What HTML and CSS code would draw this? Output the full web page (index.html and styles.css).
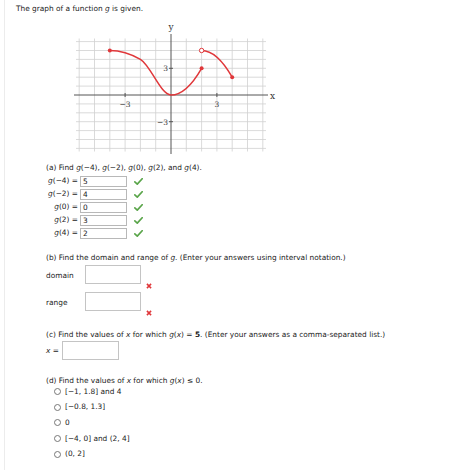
FILE: index.html
```
<!DOCTYPE html>
<html>
<head>
<meta charset="utf-8">
<link rel="stylesheet" href="styles.css">
</head>
<body>
<div class="page">
  <p class="title">The graph of a function <i>g</i> is given.</p>
  <svg class="graph" width="230" height="145" viewBox="58 18 230 145">
    <path class="grid" d="M79.2 38.5V151.5M94.5 38.5V151.5M109.8 38.5V151.5M125.1 38.5V151.5M140.4 38.5V151.5M155.7 38.5V151.5M186.3 38.5V151.5M201.6 38.5V151.5M216.9 38.5V151.5M232.2 38.5V151.5M247.5 38.5V151.5M262.8 38.5V151.5M76 41.6H266M76 50.5H266M76 59.4H266M76 68.3H266M76 77.2H266M76 86.1H266M76 103.9H266M76 112.8H266M76 121.7H266M76 130.6H266M76 139.5H266M76 148.4H266"/>
    <path class="axis" d="M74 95H268M171 34V154M125.1 93V97M216.9 93V97M169 68.3H173M169 121.7H173"/>
    <text class="axlbl" x="171" y="30" text-anchor="middle">y</text>
    <text class="axlbl" x="270" y="98.5">x</text>
    <text class="num" x="125.1" y="106.5" text-anchor="middle">−3</text>
    <text class="num" x="216.9" y="106.5" text-anchor="middle">3</text>
    <text class="num" x="168" y="71" text-anchor="end">3</text>
    <text class="num" x="168" y="124.5" text-anchor="end">−3</text>
    <path class="curve" d="M109.8 50.5Q125.1 50.5 140.4 59.4C150.6 65.33 160.8 95 171 95Q186.3 95 201.6 68.3"/>
    <path class="curve" d="M201.6 50.5Q216.9 50.5 232.2 77.2"/>
    <circle class="dot" cx="109.8" cy="50.5" r="2"/>
    <circle class="dot" cx="201.6" cy="68.3" r="2"/>
    <circle class="dot" cx="232.2" cy="77.2" r="2"/>
    <circle class="open" cx="201.6" cy="50.5" r="2.2"/>
  </svg>

  <div class="part part-a">
    <p class="q">(a) Find <i>g</i>(−4), <i>g</i>(−2), <i>g</i>(0), <i>g</i>(2), and <i>g</i>(4).</p>
    <div class="rows">
      <span class="lbl"><i>g</i>(−4) =</span><span class="box">5</span><span class="okcell"><svg class="ok" viewBox="0 0 10 8"><path d="M0.8 4.4L3.6 7L9.2 0.8"/></svg></span>
      <span class="lbl"><i>g</i>(−2) =</span><span class="box">4</span><span class="okcell"><svg class="ok" viewBox="0 0 10 8"><path d="M0.8 4.4L3.6 7L9.2 0.8"/></svg></span>
      <span class="lbl"><i>g</i>(0) =</span><span class="box">0</span><span class="okcell"><svg class="ok" viewBox="0 0 10 8"><path d="M0.8 4.4L3.6 7L9.2 0.8"/></svg></span>
      <span class="lbl"><i>g</i>(2) =</span><span class="box">3</span><span class="okcell"><svg class="ok" viewBox="0 0 10 8"><path d="M0.8 4.4L3.6 7L9.2 0.8"/></svg></span>
      <span class="lbl"><i>g</i>(4) =</span><span class="box">2</span><span class="okcell"><svg class="ok" viewBox="0 0 10 8"><path d="M0.8 4.4L3.6 7L9.2 0.8"/></svg></span>
    </div>
  </div>

  <div class="part part-b">
    <p class="q">(b) Find the domain and range of <i>g</i>. (Enter your answers using interval notation.)</p>
    <div class="dr-row">
      <span class="dr-lbl">domain</span><span class="bigbox"></span><svg class="bad" viewBox="0 0 8 8"><path d="M1.2 1.2L6.8 6.8M6.8 1.2L1.2 6.8"/></svg>
    </div>
    <div class="dr-row">
      <span class="dr-lbl">range</span><span class="bigbox"></span><svg class="bad" viewBox="0 0 8 8"><path d="M1.2 1.2L6.8 6.8M6.8 1.2L1.2 6.8"/></svg>
    </div>
  </div>

  <div class="part part-c">
    <p class="q">(c) Find the values of <i>x</i> for which <i>g</i>(<i>x</i>) = <b>5</b>. (Enter your answers as a comma-separated list.)</p>
    <div class="x-row">
      <span class="x-lbl"><i>x</i> =</span><span class="xbox"></span>
    </div>
  </div>

  <div class="part part-d">
    <p class="q">(d) Find the values of <i>x</i> for which <i>g</i>(<i>x</i>) ≤ 0.</p>
    <ul class="opts">
      <li><span class="radio"></span>[−1, 1.8] and 4</li>
      <li><span class="radio"></span>[−0.8, 1.3]</li>
      <li><span class="radio"></span>0</li>
      <li><span class="radio"></span>[−4, 0] and (2, 4]</li>
      <li><span class="radio"></span>(0, 2]</li>
    </ul>
  </div>
</div>
</body>
</html>
```

FILE: styles.css
```
html, body {
  margin: 0;
  padding: 0;
  background: #fff;
}
body {
  font-family: "DejaVu Sans", Verdana, sans-serif;
  font-size: 7.4px;
  color: #222;
  line-height: 10px;
}
.page {
  width: 474px;
  height: 470px;
  box-sizing: border-box;
  border-left: 1px solid #ececec;
  margin-left: 4px;
  padding-left: 11px;
}
p { margin: 0; }
.title {
  padding-top: 4px;
  line-height: 10px;
}
.graph {
  display: block;
  margin-top: 4px;
  margin-left: 42px;
}
.grid { stroke: #d0d0d0; stroke-width: 0.8; fill: none; }
.axis { stroke: #555; stroke-width: 1; fill: none; }
.axlbl { font-family: "DejaVu Serif", "Liberation Serif", serif; font-size: 9px; fill: #333; }
.num { font-family: "DejaVu Serif", "Liberation Serif", serif; font-size: 7.5px; fill: #333; }
.curve { stroke: #e0373a; stroke-width: 1.5; fill: none; stroke-linecap: round; }
.dot { fill: #e0373a; }
.open { fill: #fff; stroke: #e0373a; stroke-width: 1; }

.part { margin-left: 30px; }
.rows {
  display: grid;
  grid-template-columns: 32px 47px 16px;
  grid-auto-rows: 13px;
  column-gap: 2px;
  align-items: center;
  margin-top: 1.5px;
}
.lbl { text-align: right; white-space: nowrap; }
.box {
  height: 11px;
  box-sizing: border-box;
  border: 1px solid #b8b8b8;
  padding-left: 2px;
  line-height: 9px;
}
.okcell {
  display: flex;
  align-items: center;
  height: 13px;
  padding-left: 5px;
}
.ok {
  display: block;
  width: 9px;
  height: 7px;
}
.ok path { fill: none; stroke: #5aa54a; stroke-width: 1.9; stroke-linejoin: round; stroke-linecap: round; }

.part-b { margin-top: 13.5px; }
.dr-row {
  display: flex;
  align-items: center;
  height: 19px;
  margin-top: 2px;
}
.dr-row + .dr-row { margin-top: 8px; }
.dr-lbl { width: 39px; padding-top: 2px; }
.bigbox {
  width: 56px;
  height: 19px;
  box-sizing: border-box;
  border: 1px solid #c4c4c4;
}
.bad {
  width: 6px;
  height: 6px;
  margin-left: 5px;
  align-self: flex-end;
  margin-bottom: -5px;
}
.bad path { fill: none; stroke: #e0373a; stroke-width: 2; }

.part-c { margin-top: 19px; }
.x-row {
  display: flex;
  align-items: center;
  margin-top: 1px;
  height: 19px;
}
.x-lbl { width: 16px; }
.xbox {
  width: 57px;
  height: 19px;
  box-sizing: border-box;
  border: 1px solid #c4c4c4;
}

.part-d { margin-top: 16px; }
.opts {
  list-style: none;
  margin: -2px 0 0 0;
  padding: 0 0 0 8px;
}
.opts li {
  height: 15.6px;
  display: flex;
  align-items: center;
}
.radio {
  width: 7px;
  height: 7px;
  box-sizing: border-box;
  border: 1px solid #777;
  border-radius: 50%;
  margin-right: 4px;
}
```
